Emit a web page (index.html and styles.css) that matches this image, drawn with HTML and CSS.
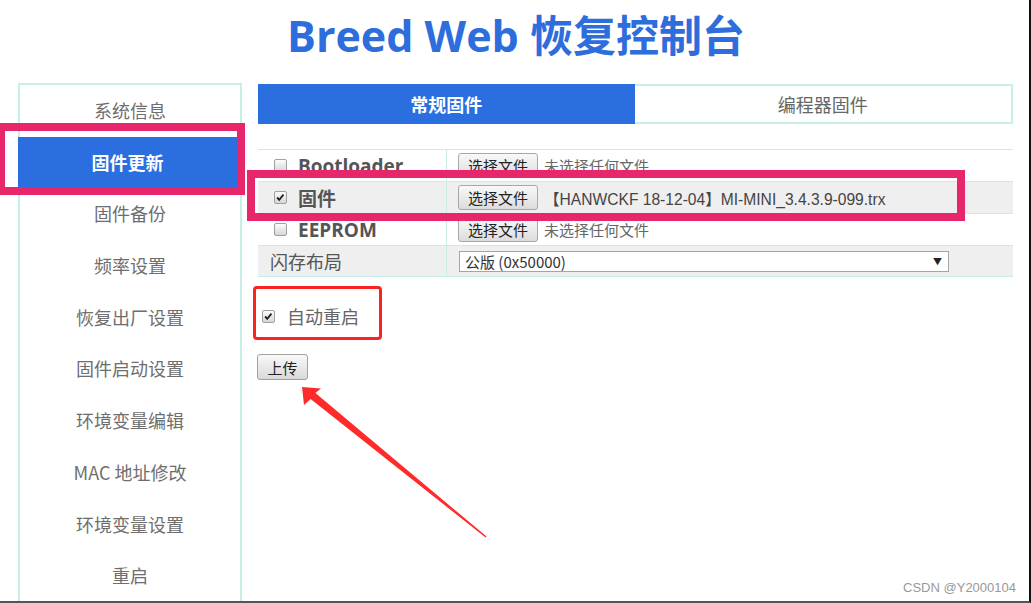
FILE: index.html
```html
<!DOCTYPE html>
<html lang="zh-CN">
<head>
<meta charset="utf-8">
<title>Breed Web 恢复控制台</title>
<link rel="stylesheet" href="styles.css">
</head>
<body>
<div class="page">
  <h1 class="title">Breed Web 恢复控制台</h1>
  <div class="main">
    <nav class="sidebar">
      <div class="nav-item">系统信息</div>
      <div class="nav-item active">固件更新</div>
      <div class="nav-item">固件备份</div>
      <div class="nav-item">频率设置</div>
      <div class="nav-item">恢复出厂设置</div>
      <div class="nav-item">固件启动设置</div>
      <div class="nav-item">环境变量编辑</div>
      <div class="nav-item">MAC 地址修改</div>
      <div class="nav-item">环境变量设置</div>
      <div class="nav-item">重启</div>
    </nav>
    <section class="content">
      <div class="tabs">
        <div class="tab on">常规固件</div>
        <div class="tab off">编程器固件</div>
      </div>
      <div class="form">
        <div class="row">
          <div class="cell-l"><span class="cb"></span><span class="lbl">Bootloader</span></div>
          <div class="cell-r"><span class="filebtn">选择文件</span><span class="fname">未选择任何文件</span></div>
        </div>
        <div class="row alt">
          <div class="cell-l"><span class="cb"><svg viewBox="0 0 13 13" width="11" height="11"><path d="M2.5 6.5 L5 9.2 L10 3.2" fill="none" stroke="#222" stroke-width="2.2"/></svg></span><span class="lbl">固件</span></div>
          <div class="cell-r"><span class="filebtn">选择文件</span><span class="fname latin">【HANWCKF 18-12-04】MI-MINI_3.4.3.9-099.trx</span></div>
        </div>
        <div class="row">
          <div class="cell-l"><span class="cb"></span><span class="lbl">EEPROM</span></div>
          <div class="cell-r"><span class="filebtn">选择文件</span><span class="fname">未选择任何文件</span></div>
        </div>
        <div class="row alt last">
          <div class="cell-l"><span class="lbl-plain">闪存布局</span></div>
          <div class="cell-r"><div class="select"><span>公版 (0x50000)</span><span class="caret">▼</span></div></div>
        </div>
      </div>
      <div class="auto"><span class="cb"><svg viewBox="0 0 13 13" width="11" height="11"><path d="M2.5 6.5 L5 9.2 L10 3.2" fill="none" stroke="#222" stroke-width="2.2"/></svg></span><span>自动重启</span></div>
      <button class="upload" type="button">上传</button>
    </section>
  </div>

  <div class="anno anno-nav"></div>
  <div class="anno anno-fw"></div>
  <div class="anno anno-auto"></div>
  <svg class="arrow" viewBox="295 380 200 165" width="200" height="165">
    <polygon points="302,387 321,388.5 315.4,393.1 486.6,536.6 485.6,537.6 310.6,398.9 304,405" fill="#ff2a2a"/>
  </svg>
  <div class="watermark">CSDN @Y2000104</div>
</div>
</body>
</html>
```
FILE: styles.css
```css
body {
  margin: 0;
  background: #fff;
}

.page {
  position: relative;
  width: 1031px;
  height: 603px;
  box-sizing: border-box;
  border-right: 2px solid #111;
  border-bottom: 2px solid #555;
  overflow: hidden;
  font-family: "Noto Sans CJK SC", sans-serif;
}

.title {
  margin: 0;
  height: 83px;
  padding-left: 3px;
  text-align: center;
  font: 700 43px/72px "Open Sans", "Noto Sans CJK SC", sans-serif;
  color: #2d6ddc;
}

.main {
  display: flex;
  gap: 16px;
  padding-left: 18px;
}

.sidebar {
  width: 224px;
  height: 540px;
  box-sizing: border-box;
  border: 2px solid #c8eee8;
  border-bottom: none;
  flex: none;
}

.nav-item {
  height: 51.7px;
  line-height: 51.7px;
  text-align: center;
  font-size: 18px;
  color: #6e6e6e;
}

.nav-item.active {
  background: #2b6ee0;
  color: #fff;
  font-weight: 700;
  margin: 0 3px 0 -2px;
}

.content {
  width: 755px;
  padding-top: 1px;
}

.tabs {
  display: flex;
  height: 40px;
}

.tab {
  flex: 1;
  box-sizing: border-box;
  text-align: center;
  font-size: 18px;
  line-height: 40px;
}

.tab.on {
  background: #2b6ee0;
  color: #fff;
  font-weight: 700;
}

.tab.off {
  border: 2px solid #c8eee8;
  border-left: none;
  color: #666;
  line-height: 36px;
}

.form {
  margin-top: 25px;
  border-top: 1px solid #c9ece4;
}

.row {
  display: grid;
  grid-template-columns: 189px 1fr;
  height: 32px;
  box-sizing: border-box;
  border-bottom: 1px solid #c9ece4;
}

.row.last {
  height: 31px;
}

.row.alt {
  background: #efefef;
}

.cell-l {
  display: flex;
  align-items: center;
  padding-left: 12px;
  border-right: 1px solid #c9ece4;
}

.cell-r {
  display: flex;
  align-items: center;
  padding-left: 11px;
}

.cb {
  width: 13px;
  height: 13px;
  box-sizing: border-box;
  border: 1px solid #a0a0a0;
  border-radius: 2px;
  background: linear-gradient(#fdfdfd, #d6d6d6);
  margin: 0 11px 0 4px;
  display: inline-flex;
  align-items: center;
  justify-content: center;
  flex: none;
}

.lbl {
  font-family: "Open Sans", "Noto Sans CJK SC", sans-serif;
  font-size: 19px;
  font-weight: 700;
  color: #555;
}

.lbl-plain {
  font-size: 18px;
  color: #555;
}

.filebtn {
  height: 25px;
  box-sizing: border-box;
  padding: 0 9px;
  display: inline-flex;
  align-items: center;
  font-size: 15px;
  color: #222;
  border: 1px solid #a8a8a8;
  border-radius: 3px;
  background: linear-gradient(#f9f9f9, #dcdcdc);
}

.fname {
  margin-left: 6px;
  font-size: 15px;
  color: #666;
}

.fname.latin {
  font-family: "Liberation Sans", "Noto Sans CJK SC", sans-serif;
  color: #444;
  font-size: 15.6px;
}

.select {
  width: 490px;
  height: 21px;
  box-sizing: border-box;
  margin-left: 1px;
  padding: 0 6px 0 5px;
  border: 1px solid #a5a5a5;
  background: #fff;
  display: flex;
  align-items: center;
  justify-content: space-between;
  font-size: 15px;
  color: #333;
}

.caret {
  font-size: 9px;
  color: #222;
}

.auto {
  display: flex;
  align-items: center;
  height: 32px;
  margin-top: 23px;
  font-size: 18px;
  color: #666;
}

.auto .cb {
  margin: 0 12px 0 4px;
}

.upload {
  display: block;
  margin: 22px 0 0 -1px;
  width: 51px;
  height: 26px;
  padding: 0;
  font-family: "Noto Sans CJK SC", sans-serif;
  font-size: 15px;
  color: #222;
  border: 1px solid #a0a0a0;
  border-radius: 3px;
  background: linear-gradient(#f9f9f9, #d9d9d9);
}

.anno {
  position: absolute;
  box-sizing: border-box;
}

.anno-nav {
  left: -3px;
  top: 123px;
  width: 248px;
  height: 72px;
  border: 8px solid #e8266b;
}

.anno-fw {
  left: 247px;
  top: 170px;
  width: 718px;
  height: 51px;
  border: 8px solid #e8266b;
}

.anno-auto {
  left: 253px;
  top: 286px;
  width: 129px;
  height: 54px;
  border: 3px solid #fb2222;
  border-radius: 4px;
}

.arrow {
  position: absolute;
  left: 295px;
  top: 380px;
}

.watermark {
  position: absolute;
  right: 13px;
  bottom: 6px;
  font-family: "Liberation Sans", sans-serif;
  font-size: 13px;
  line-height: 15px;
  color: #999;
}
```
